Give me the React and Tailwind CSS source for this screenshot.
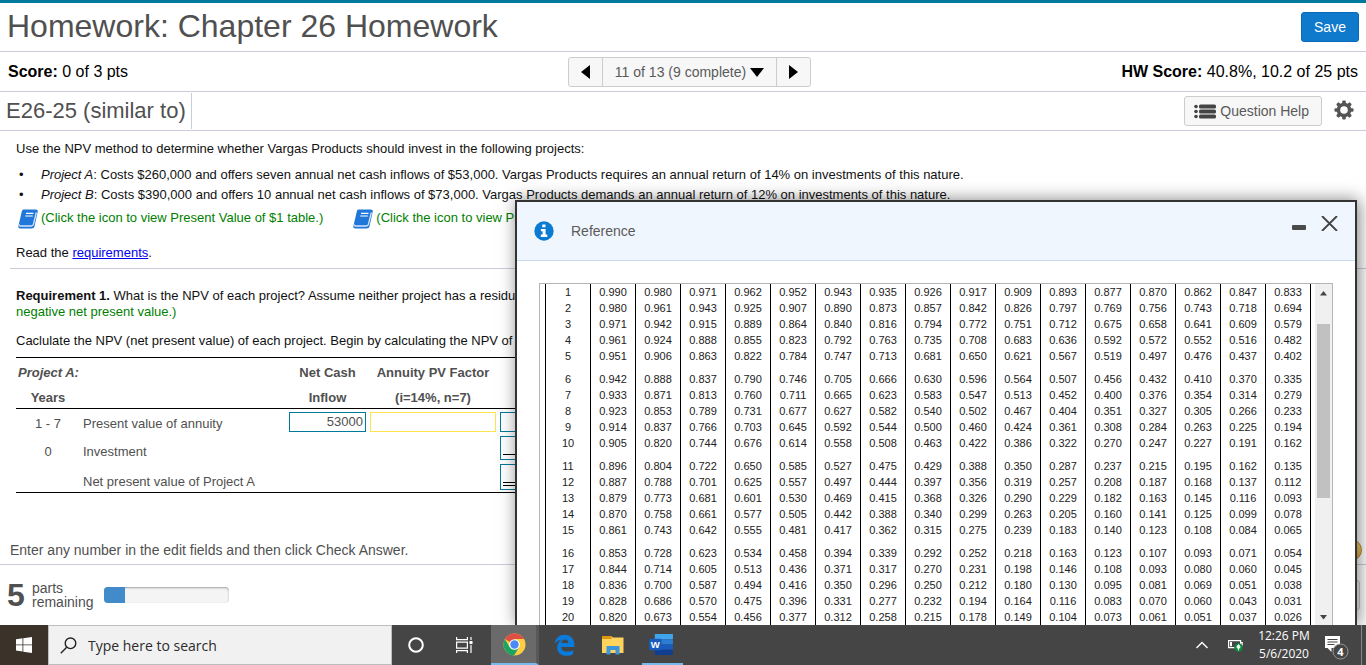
import { useId } from 'react'

const PV_ROWS = [
  '0.990 0.980 0.971 0.962 0.952 0.943 0.935 0.926 0.917 0.909 0.893 0.877 0.870 0.862 0.847 0.833',
  '0.980 0.961 0.943 0.925 0.907 0.890 0.873 0.857 0.842 0.826 0.797 0.769 0.756 0.743 0.718 0.694',
  '0.971 0.942 0.915 0.889 0.864 0.840 0.816 0.794 0.772 0.751 0.712 0.675 0.658 0.641 0.609 0.579',
  '0.961 0.924 0.888 0.855 0.823 0.792 0.763 0.735 0.708 0.683 0.636 0.592 0.572 0.552 0.516 0.482',
  '0.951 0.906 0.863 0.822 0.784 0.747 0.713 0.681 0.650 0.621 0.567 0.519 0.497 0.476 0.437 0.402',
  '0.942 0.888 0.837 0.790 0.746 0.705 0.666 0.630 0.596 0.564 0.507 0.456 0.432 0.410 0.370 0.335',
  '0.933 0.871 0.813 0.760 0.711 0.665 0.623 0.583 0.547 0.513 0.452 0.400 0.376 0.354 0.314 0.279',
  '0.923 0.853 0.789 0.731 0.677 0.627 0.582 0.540 0.502 0.467 0.404 0.351 0.327 0.305 0.266 0.233',
  '0.914 0.837 0.766 0.703 0.645 0.592 0.544 0.500 0.460 0.424 0.361 0.308 0.284 0.263 0.225 0.194',
  '0.905 0.820 0.744 0.676 0.614 0.558 0.508 0.463 0.422 0.386 0.322 0.270 0.247 0.227 0.191 0.162',
  '0.896 0.804 0.722 0.650 0.585 0.527 0.475 0.429 0.388 0.350 0.287 0.237 0.215 0.195 0.162 0.135',
  '0.887 0.788 0.701 0.625 0.557 0.497 0.444 0.397 0.356 0.319 0.257 0.208 0.187 0.168 0.137 0.112',
  '0.879 0.773 0.681 0.601 0.530 0.469 0.415 0.368 0.326 0.290 0.229 0.182 0.163 0.145 0.116 0.093',
  '0.870 0.758 0.661 0.577 0.505 0.442 0.388 0.340 0.299 0.263 0.205 0.160 0.141 0.125 0.099 0.078',
  '0.861 0.743 0.642 0.555 0.481 0.417 0.362 0.315 0.275 0.239 0.183 0.140 0.123 0.108 0.084 0.065',
  '0.853 0.728 0.623 0.534 0.458 0.394 0.339 0.292 0.252 0.218 0.163 0.123 0.107 0.093 0.071 0.054',
  '0.844 0.714 0.605 0.513 0.436 0.371 0.317 0.270 0.231 0.198 0.146 0.108 0.093 0.080 0.060 0.045',
  '0.836 0.700 0.587 0.494 0.416 0.350 0.296 0.250 0.212 0.180 0.130 0.095 0.081 0.069 0.051 0.038',
  '0.828 0.686 0.570 0.475 0.396 0.331 0.277 0.232 0.194 0.164 0.116 0.083 0.070 0.060 0.043 0.031',
  '0.820 0.673 0.554 0.456 0.377 0.312 0.258 0.215 0.178 0.149 0.104 0.073 0.061 0.051 0.037 0.026',
].map((row) => row.split(' '))

function BookIcon() {
  return (
    <svg width="21" height="20" viewBox="0 0 21 20" className="shrink-0">
      <path d="M6.200.5h11.600c1.500 0 2.200.9 1.900 2.300L16.600 17c-.4 1.700-1.300 2.500-3 2.500H2.300C.8 19.500 0 18.500.4 17L3.800 2.500C4.100 1.100 4.800.5 6.200.5z" fill="#2176d9" />
      <path d="M1.300 15.300c-.3 1.200.2 1.700 1.300 1.700h10.600c1.300 0 2-.5 2.300-1.800L18.300 3.500" fill="none" stroke="#d5e6fa" strokeWidth="1.300" />
      <path d="M8 4.300h7.500M7.300 7h7.500" stroke="#fff" strokeWidth="1.200" />
    </svg>
  )
}

function GearIcon() {
  return (
    <svg width="20" height="20" viewBox="0 0 20 20">
      <g fill="#555">
        {[0, 45, 90, 135].map((a) => (
          <rect key={a} x="8.200" y="0.500" width="3.600" height="19" rx="1" transform={`rotate(${a} 10 10)`} />
        ))}
        <circle cx="10" cy="10" r="7.300" />
      </g>
      <circle cx="10" cy="10" r="3.800" fill="#fff" />
    </svg>
  )
}

function Header() {
  return (
    <header className="border-t-3 border-[#007a9c]">
      <div className="flex h-[49px] items-center justify-between border-b border-[#c9ccdb] px-[7px]">
        <h1 className="pb-[2px] text-[32px] leading-[36px] text-[#505050]">Homework: Chapter 26 Homework</h1>
        <button className="h-[30px] w-[58px] rounded-[3px] border border-[#0b6bb8] bg-[#0f79cb] text-[14px] text-white">Save</button>
      </div>
      <div className="grid h-[40px] grid-cols-[1fr_auto_1fr] items-center border-b border-[#c9ccdb] px-2 text-[16px] text-black">
        <p><b>Score:</b> 0 of 3 pts</p>
        <nav className="mr-[-13px] flex h-[30px] items-stretch rounded-[3px] border border-[#ccc] bg-[#f7f7f7] text-[14px] text-[#5a5a5a]">
          <button aria-label="Previous" className="flex w-[33px] items-center justify-center">
            <svg width="9" height="14" viewBox="0 0 9 14"><path d="M9 0v14L0 7z" /></svg>
          </button>
          <button className="flex items-center gap-1 border-x border-[#ccc] px-3 pt-[2px]">
            11 of 13 (9 complete)
            <svg width="14" height="9" viewBox="0 0 14 9"><path d="M0 0h14L7 9z" /></svg>
          </button>
          <button aria-label="Next" className="flex w-[33px] items-center justify-center">
            <svg width="9" height="14" viewBox="0 0 9 14"><path d="M0 0v14l9-7z" /></svg>
          </button>
        </nav>
        <p className="text-right"><b>HW Score:</b> 40.8%, 10.2 of 25 pts</p>
      </div>
      <div className="flex h-[39px] items-center justify-between border-b border-[#c9ccdb] pr-3 pl-[6px]">
        <h2 className="h-[36px] border-r border-[#c9ccdb] pr-[5px] text-[22px] leading-[36px] text-[#505050]">E26-25 (similar to)</h2>
        <div className="flex items-center gap-3">
          <button className="flex h-[30px] items-center gap-1 rounded-[3px] border border-[#ccc] bg-[#f7f7f7] pr-3 pl-[9px] text-[14px] text-[#5a5a5a]">
            <svg width="22" height="15" viewBox="0 0 22 15" fill="#444">
              {[2.500, 7.500, 12.500].map((y) => (
                <g key={y}>
                  <circle cx="2" cy={y} r="1.800" />
                  <rect x="5" y={y - 2} width="17" height="4" rx="1.500" />
                </g>
              ))}
            </svg>
            Question Help
          </button>
          <button aria-label="Settings" className="pb-[2px]"><GearIcon /></button>
        </div>
      </div>
    </header>
  )
}

function Question() {
  return (
    <section className="pt-[10px] pl-4 text-[13px] leading-[16px] whitespace-nowrap text-[#111]">
      <p>Use the NPV method to determine whether Vargas Products should invest in the following projects:</p>
      <ul className="mt-2 leading-[20px]">
        <li className="flex"><span className="w-[25px] pl-[3px]">•</span><span><i>Project A</i>: Costs $260,000 and offers seven annual net cash inflows of $53,000. Vargas Products requires an annual return of 14% on investments of this nature.</span></li>
        <li className="flex"><span className="w-[25px] pl-[3px]">•</span><span><i>Project B</i>: Costs $390,000 and offers 10 annual net cash inflows of $73,000. Vargas Products demands an annual return of 12% on investments of this nature.</span></li>
      </ul>
      <div className="mt-1 flex gap-[30px] pl-[2px] text-[#008000]">
        <button className="flex items-center gap-[2px]"><BookIcon /><span className="pb-[2px]">(Click the icon to view Present Value of $1 table.)</span></button>
        <button className="flex items-center gap-[2px]"><BookIcon /><span className="pb-[2px]">(Click the icon to view Present Value</span></button>
      </div>
      <p className="mt-4">Read the <a href="#requirements" className="text-[#0000ee] underline">requirements</a>.</p>
      <hr className="-ml-[6px] mt-[7px] border-[#c9ccdb]" />
      <p className="mt-[19px]">
        <b>Requirement 1.</b> What is the NPV of each project? Assume neither project has a residual<br />
        <span className="text-[#008000]">negative net present value.)</span>
      </p>
      <p className="mt-[13px]">Caclulate the NPV (net present value) of each project. Begin by calculating the NPV of</p>
    </section>
  )
}

function ProjectTable() {
  return (
    <table className="mt-2 ml-4 w-[620px] table-fixed border-separate border-spacing-0 text-[13px] leading-[16px] text-[#505050]">
      <colgroup>
        <col className="w-[64px]" /><col className="w-[207px]" /><col className="w-[81px]" /><col className="w-[130px]" /><col />
      </colgroup>
      <thead>
        <tr className="h-[28px]">
          <th colSpan="2" className="border-t border-black p-0 pt-[2px] pl-[2px] text-left italic">Project A:</th>
          <th className="border-t border-black p-0 pt-[2px]">Net Cash</th>
          <th className="border-t border-black p-0 pt-[2px]">Annuity PV Factor</th>
          <th className="border-t border-black p-0" />
        </tr>
        <tr className="h-[24px]">
          <th className="border-b border-black p-0 pt-[2px]">Years</th>
          <th className="border-b border-black p-0" />
          <th className="border-b border-black p-0 pt-[2px]">Inflow</th>
          <th className="border-b border-black p-0 pt-[2px]">(i=14%, n=7)</th>
          <th className="border-b border-black p-0" />
        </tr>
      </thead>
      <tbody>
        <tr className="h-[25px] align-bottom">
          <td className="p-0 pb-[2px] text-center">1 - 7</td>
          <td className="p-0 pb-[2px] pl-[3px]">Present value of annuity</td>
          <td className="px-[2px] pt-[3px] pb-[2px]">
            <input aria-label="Net cash inflow" defaultValue="53000" className="block h-[20px] w-full border border-[#007a9c] bg-white pr-[2px] pb-[2px] text-right" />
          </td>
          <td className="px-[2px] pt-[3px] pb-[2px]">
            <input aria-label="Annuity PV factor" className="block h-[20px] w-full border border-[#ffe34d] bg-white" />
          </td>
          <td className="px-[2px] pt-[3px] pb-[2px]">
            <input aria-label="Present value" className="block h-[20px] w-full border border-[#007a9c] bg-white" />
          </td>
        </tr>
        <tr className="h-[28px] align-bottom">
          <td className="p-0 pb-[2px] text-center">0</td>
          <td className="p-0 pb-[2px] pl-[3px]">Investment</td>
          <td /><td />
          <td className="px-[2px] pt-[2px] pb-[2px]">
            <div className="h-[24px] border border-[#007a9c] px-[2px] pb-1">
              <input aria-label="Investment" className="block h-[18px] w-full border-b border-black" />
            </div>
          </td>
        </tr>
        <tr className="h-[31px] align-bottom">
          <td className="border-b border-black" />
          <td className="border-b border-black p-0 pb-[2px] pl-[3px]">Net present value of Project A</td>
          <td className="border-b border-black" /><td className="border-b border-black" />
          <td className="border-b border-black px-[2px] pt-[2px] pb-[2px]">
            <div className="h-[26px] border border-[#007a9c] px-[2px]">
              <input aria-label="Net present value of Project A" className="block h-[21px] w-full border-b-4 border-double border-black" />
            </div>
          </td>
        </tr>
      </tbody>
    </table>
  )
}

function Footer() {
  return (
    <footer className="mt-auto text-[14px] text-[#505050]">
      <div className="flex h-[30px] items-center justify-between border-b border-[#c9ccdb] pr-1 pl-[10px]">
        <p className="pt-[2px]">Enter any number in the edit fields and then click Check Answer.</p>
        <button aria-label="Help" className="h-[22px] w-[22px] rounded-full border border-[#b98a2c] bg-linear-to-b from-[#f6d879] to-[#e0a93c]" />
      </div>
      <div className="flex h-[60px] items-center justify-between pr-[6px] pl-[7px]">
        <div className="flex items-center">
          <b className="w-[25px] text-[32px] leading-[32px]">5</b>
          <span className="w-[72px] leading-[14px]">parts<br />remaining</span>
          <div className="h-[16px] w-[125px] overflow-hidden rounded-[4px] bg-[#f4f4f4] shadow-[inset_0_1px_2px_rgba(0,0,0,0.35)]">
            <div className="h-full bg-[#428bca]" style={{ width: `${(1 / 6) * 100}%` }} />
          </div>
        </div>
        <button aria-label="Check Answer" className="h-[30px] w-[110px] rounded-[3px] border border-[#ccc] bg-[#f7f7f7]" />
      </div>
    </footer>
  )
}

function ReferenceDialog() {
  const titleId = useId()
  return (
    <div role="dialog" aria-labelledby={titleId} className="absolute top-[200px] right-[9px] bottom-0 flex w-[842px] flex-col border-2 border-b-0 border-[#333] bg-white shadow-[2px_0_16px_rgba(0,0,0,0.5)]">
      <div className="flex h-[59px] shrink-0 items-center border-b border-[#c9dcef] bg-[#f0f6fe] px-[17px]">
        <svg width="20" height="20" viewBox="0 0 20 20">
          <circle cx="10" cy="10" r="9.700" fill="#0a7bd0" />
          <path d="M8.300 3.500h3.200v2.700H8.300zM6.900 8h4.700v5.600h1.700V16H6.800v-2.400h1.800v-3.300H6.900z" fill="#fff" />
        </svg>
        <h3 id={titleId} className="ml-[17px] flex-1 text-[14px] text-[#5a5a5a]">Reference</h3>
        <div className="mb-4 flex items-center gap-[15px]">
          <button aria-label="Minimize" className="pt-2">
            <svg width="14" height="5" viewBox="0 0 14 5"><rect width="14" height="5" rx="1" fill="#4a4a4a" /></svg>
          </button>
          <button aria-label="Close">
            <svg width="17" height="15" viewBox="0 0 17 15"><path d="M1 0l15 15M16 0L1 15" stroke="#444" strokeWidth="1.900" /></svg>
          </button>
        </div>
      </div>
      <div className="mx-[22px] mt-[22px] flex min-h-0 flex-1 justify-between overflow-hidden border border-b-0 border-[#b5b5b5]">
        <table className="ml-[5px] table-fixed border-separate border-spacing-0 self-start text-center text-[11px] leading-[16px] text-[#222]">
          <tbody>
            {PV_ROWS.map((row, i) => (
              <tr key={i} className={i % 5 === 4 ? 'h-[23px] align-top' : 'h-[16px] align-top'}>
                <th scope="row" className="w-[45px] border-l border-black p-0 font-normal">{i + 1}</th>
                {row.map((v, j) => (
                  <td key={j} className="w-[45px] min-w-[45px] border-l border-black p-0 last:w-[46px] last:min-w-[46px] last:border-r">{v}</td>
                ))}
              </tr>
            ))}
          </tbody>
        </table>
        <div className="flex w-[17px] flex-col items-center bg-[#f0f0f0] py-[5px]">
          <svg width="7" height="5" viewBox="0 0 7 5" className="mt-[2px]"><path d="M0 4.500L3.500 0 7 4.500z" fill="#444" /></svg>
          <div className="mt-7 h-[174px] w-[13px] bg-[#c1c1c1]" />
          <svg width="7" height="5" viewBox="0 0 7 5" className="mt-auto"><path d="M0 0h7L3.500 4.500z" fill="#444" /></svg>
        </div>
      </div>
    </div>
  )
}

function ChromeIcon() {
  return (
    <svg width="23" height="23" viewBox="0 0 24 24">
      <circle cx="12" cy="12" r="11.500" fill="#ffcd42" />
      <path d="M12 12L2 6.300A11.500 11.500 0 0 1 22 6.300H12z" fill="#de4f43" />
      <path d="M2 6.300A11.500 11.500 0 0 0 11.500 23.500L16.800 14.800 12 12 7 14.800z" fill="#1da362" />
      <circle cx="12" cy="12" r="5.600" fill="#fff" />
      <circle cx="12" cy="12" r="4.400" fill="#4a8af4" />
    </svg>
  )
}

function Taskbar() {
  return (
    <div className="flex h-[40px] shrink-0 items-stretch bg-[#454545] text-white">
      <button aria-label="Start" className="flex w-[48px] items-center justify-center bg-[#3b322a]">
        <svg width="16" height="16" viewBox="0 0 16 16" fill="#fff"><path d="M0 2.200l6.500-.9v6.200H0zM7.300 1.200L16 0v7.500H7.300zM0 8.300h6.500v6.200L0 13.600zM7.300 8.300H16V16l-8.700-1.200z" /></svg>
      </button>
      <label className="flex w-[344px] items-center border border-[#bdbdbd] bg-[#f1f1f1] pl-[11px]">
        <svg width="17" height="17" viewBox="0 0 17 17" fill="none" stroke="#222" strokeWidth="1.400"><circle cx="10.500" cy="6.300" r="5.300" /><path d="M6.700 10.300L.8 16.300" /></svg>
        <input aria-label="Search" placeholder="Type here to search" className="ml-[11px] min-w-0 flex-1 font-['Open_Sans',sans-serif] text-[14px] placeholder:text-[#2b2b2b]" />
      </label>
      <button aria-label="Cortana" className="flex w-[48px] items-center justify-center">
        <svg width="16" height="16" viewBox="0 0 16 16"><circle cx="8" cy="8" r="6.800" fill="none" stroke="#fff" strokeWidth="2" /></svg>
      </button>
      <button aria-label="Task view" className="flex w-[51px] items-center justify-center pr-[3px]">
        <svg width="17" height="16" viewBox="0 0 17 16" fill="none" stroke="#fff" strokeWidth="1.200">
          <path d="M.6 0v2.600h10.800V0M.6 5.200h10.800v6H.6zM.6 16v-2.400h10.800V16M15 0v3M15 8v8" />
          <path d="M13.500 4h3v3h-3z" fill="#fff" stroke="none" />
        </svg>
      </button>
      <button aria-label="Chrome" className="flex w-[48px] items-center justify-center border-r-3 border-b-2 border-r-[#585858] border-b-[#76b9ed] bg-[#6a6a6a] pl-[2px]"><ChromeIcon /></button>
      <button aria-label="Edge" className="flex w-[50px] items-center justify-center">
        <svg width="21" height="22" viewBox="0 0 21 22">
          <path d="M.5 9.800C1.500 4.200 5.300.8 10.700.8c6.200 0 9.700 4.600 9.700 9.600v2.500H7.200c.2 3 2.700 4.700 6 4.700 2.200 0 4.200-.6 5.900-1.600v4.300c-2 1-4.200 1.500-6.700 1.500-5.500 0-9.200-3.300-9.200-8.400 0-3.300 1.700-6.100 4.500-7.600-2.800.5-5.300 1.800-7.200 4zM7.400 9h6.900c0-2.100-1.100-3.600-3.200-3.600-2 0-3.300 1.400-3.700 3.600z" fill="#0b7bdb" />
        </svg>
      </button>
      <button aria-label="File Explorer" className="flex w-[48px] items-center justify-center">
        <svg width="22" height="19" viewBox="0 0 22 19">
          <path d="M0 0h9l2 1.500h10.500V17H0z" fill="#ffd35c" />
          <path d="M0 0h9l1 3H0z" fill="#dd9a0c" />
          <path d="M4.500 10h13v8.500h-4V14h-5v4.500h-4z" fill="#3a97dc" />
        </svg>
      </button>
      <button aria-label="Word" className="ml-[5px] flex w-[41px] items-center justify-center border-b-2 border-[#76b9ed] pr-[3px]">
        <svg width="24" height="21" viewBox="0 0 25 22">
          <path d="M6 0h19v5.500H6z" fill="#41a5ee" /><path d="M6 5.500h19V11H6z" fill="#2b7cd3" />
          <path d="M6 11h19v5.500H6z" fill="#185abd" /><path d="M6 16.500h19V22H6z" fill="#103f91" />
          <rect y="5" width="13" height="12" rx="1" fill="#185abd" />
          <text x="6.500" y="14.500" textAnchor="middle" fontSize="10" fontWeight="bold" fill="#fff">W</text>
        </svg>
      </button>
      <div className="ml-auto flex items-center font-['Open_Sans',sans-serif] text-[12px] leading-[18px]">
        <button aria-label="Show hidden icons">
          <svg width="12" height="8" viewBox="0 0 12 8"><path d="M.5 7L6 1.500 11.500 7" fill="none" stroke="#fff" strokeWidth="1.400" /></svg>
        </button>
        <svg width="16" height="14" viewBox="0 0 16 14" className="ml-5">
          <path d="M.6 2.600h12v7H.6zM13 4.500h1.200v3" fill="none" stroke="#fff" strokeWidth="1.200" />
          <path d="M2 4h2v4.300H2z" fill="#fff" />
          <circle cx="10.500" cy="9.500" r="4.300" fill="#10893e" />
          <path d="M10.500 6.500c2 1.500 2 3.500 0 4.500-2-1-2-3 0-4.500zM10.500 9v3.500" fill="#fff" stroke="#fff" strokeWidth=".8" />
        </svg>
        <p className="w-[80px] text-center">12:26 PM<br />5/6/2020</p>
        <button aria-label="Notifications" className="mr-3 pt-1">
          <svg width="25" height="26" viewBox="0 0 25 26">
            <path d="M1 2h15v12H7.500v4l-4-4H1z" fill="#fff" />
            <path d="M3.500 5.500h10M3.500 8h10M3.500 10.500h7" stroke="#454545" />
            <circle cx="16.500" cy="17.500" r="7.500" fill="#454545" stroke="#999" />
            <text x="16.500" y="21.500" textAnchor="middle" fontSize="11" fontWeight="bold" fill="#fff">4</text>
          </svg>
        </button>
        <button aria-label="Show desktop" className="h-[40px] w-[5px] border-l border-[#888]" />
      </div>
    </div>
  )
}

export default function App() {
  return (
    <div className="flex h-screen flex-col overflow-hidden bg-white font-['Liberation_Sans',Arial,sans-serif]">
      <main className="relative flex min-h-0 flex-1 flex-col overflow-hidden">
        <Header />
        <Question />
        <ProjectTable />
        <Footer />
        <ReferenceDialog />
      </main>
      <Taskbar />
    </div>
  )
}
